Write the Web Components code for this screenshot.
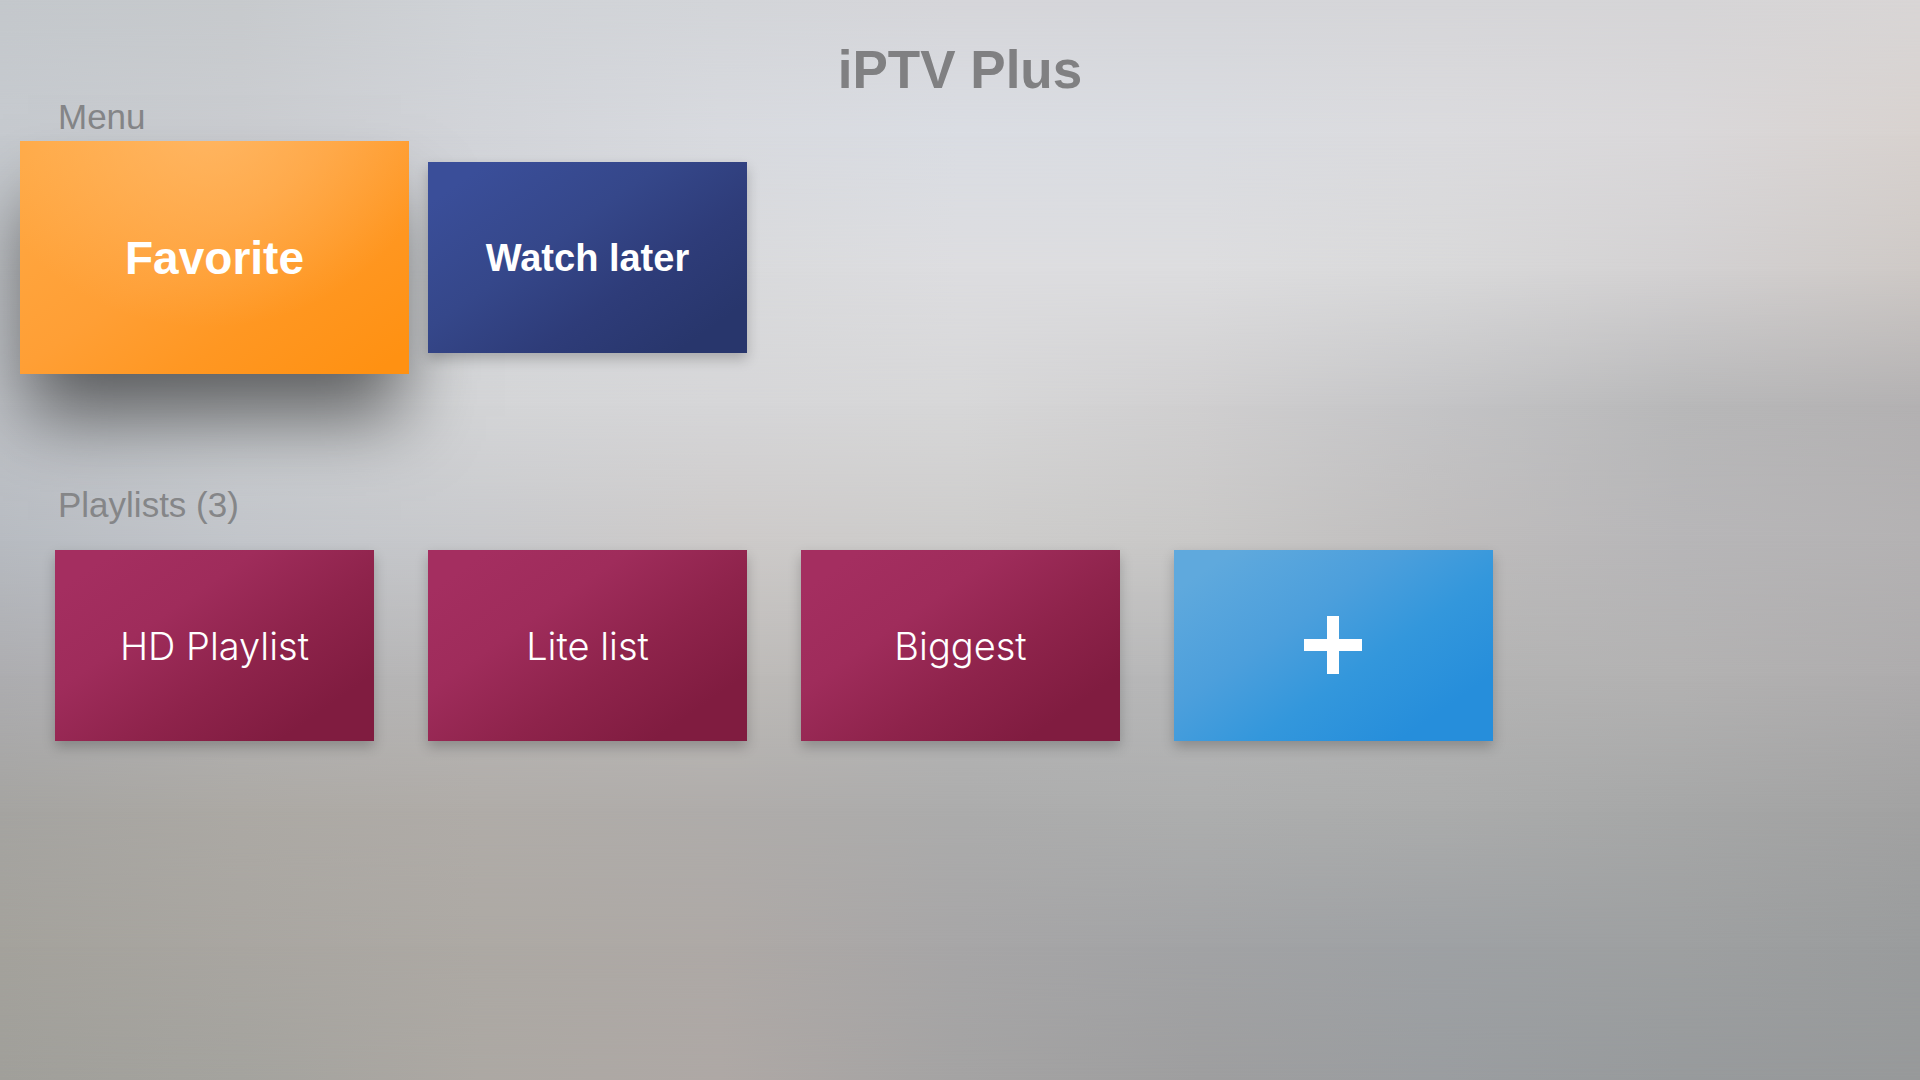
<!DOCTYPE html>
<html lang="en">
<head>
<meta charset="utf-8">
<title>iPTV Plus</title>
<style>
  html, body { margin: 0; min-height: 100%; }
  body { font-family: "Liberation Sans", Arial, sans-serif; color: #858688; }
</style>
</head>
<body>
<tv-app>
  <tv-shelf label="Menu">
    <tv-card tone="orange" focused>Favorite</tv-card>
    <tv-card tone="navy">Watch later</tv-card>
  </tv-shelf>
  <tv-shelf label="Playlists (3)">
    <tv-card tone="berry">HD Playlist</tv-card>
    <tv-card tone="berry">Lite list</tv-card>
    <tv-card tone="berry">Biggest</tv-card>
    <tv-card tone="sky" name="Add playlist"><tv-plus></tv-plus></tv-card>
  </tv-shelf>
</tv-app>

<script>
// Ambient wallpaper: rows of horizontal gradients blended vertically into a soft colour mesh.
const MESH = [
  'c4c8cc c7cacd d0d3d7 d3d5d9 d6d6da d5d6da d6d6d9 d6d5d7 d9d6d6',
  'c6cacf cbcdd1 d2d4d9 d8dadf dadde3 dadce1 dbdbde dad8da d8d2cf',
  'c2c5c9 cdd0d3 d5d7da d9dadc dddde0 dddddf d9d9da d3d1d2 cec9c6',
  'c1c4c9 cccfd2 d4d5d7 d6d6d8 d7d7d8 d0cfd0 c4c4c6 b8b8b9 b3b1b2',
  'b7bbc1 c2c5ca c8c9cc cdcac9 cdcccb c9c8c7 bfbdbd b7b6b8 b4b2b3',
  'adadb0 b3b3b5 b8b7b7 bebbb8 b8b8b8 b7b7b8 b4b4b4 b3b2b2 aeacad',
  'a5a4a1 aca9a4 b0aca8 afacaa acacac adaeae abacac a6a7a7 a2a2a2',
  'a4a29c a9a6a1 ada9a4 aea9a6 a7a6a7 a2a3a5 9ea1a4 9ea0a1 9a9c9d',
  'a09f9a a4a39e aca8a3 aea8a5 a4a3a3 9e9e9f 9a9da0 979a9c 97999a'
].map(r => r.split(' ').map(c => '#' + c));

class TvBackdrop extends HTMLElement {
  constructor() {
    super();
    const step = 100 / (MESH.length - 1);
    const layers = MESH.map((row, i) => {
      const mask = i ? `linear-gradient(transparent ${(i - 1) * step}%, #000 ${i * step}%)` : 'none';
      return `<div style="background:linear-gradient(90deg,${row.join(',')});mask-image:${mask}"></div>`;
    }).join('');
    this.attachShadow({ mode: 'open' }).innerHTML = `
      <style>
        :host { display: grid; isolation: isolate; }
        div { grid-area: 1 / 1; }
      </style>${layers}`;
  }
}

class TvApp extends HTMLElement {
  constructor() {
    super();
    this.attachShadow({ mode: 'open' }).innerHTML = `
      <style>
        :host { display: grid; grid-template-columns: minmax(0, 1fr); min-height: 100vh; overflow: hidden; }
        tv-backdrop, main { grid-area: 1 / 1; }
        main { z-index: 1; display: flex; flex-direction: column; padding-top: 43px; }
        h1 { margin: 0; font-size: 53px; line-height: 54px; text-align: center; color: #808082; }
        .shelves { display: flex; flex-direction: column; gap: 132px; }
      </style>
      <tv-backdrop></tv-backdrop>
      <main>
        <h1>iPTV Plus</h1>
        <div class="shelves"><slot></slot></div>
      </main>`;
  }
}

class TvShelf extends HTMLElement {
  connectedCallback() {
    if (this.shadowRoot) return;
    this.attachShadow({ mode: 'open' }).innerHTML = `
      <style>
        :host { display: block; padding: 0 55px; }
        section { display: flex; flex-direction: column; gap: 25px; }
        h2 { margin: 0; padding-left: 3px; font-size: 35px; line-height: 40px; font-weight: 400; }
        .row { display: flex; gap: 54px; }
      </style>
      <section aria-labelledby="t">
        <h2 id="t"></h2>
        <div class="row"><slot></slot></div>
      </section>`;
    this.shadowRoot.querySelector('h2').textContent = this.getAttribute('label');
  }
}

class TvCard extends HTMLElement {
  connectedCallback() {
    if (this.shadowRoot) return;
    this.attachShadow({ mode: 'open' }).innerHTML = `
      <style>
        :host { display: flex; flex: none; align-items: center; justify-content: center; width: 319px; height: 191px; }
        button {
          flex: none; display: flex; align-items: center; justify-content: center;
          width: 319px; height: 191px; margin: 0; padding: 0; border: 0; outline: 0;
          font: bold 38px/44px "Liberation Sans", Arial, sans-serif; color: #fff;
          background: var(--fill); box-shadow: 0 6px 12px rgba(0, 0, 0, .22);
        }
        :host([focused]) button {
          width: 389px; height: 233px; font-size: 46px;
          box-shadow: 0 50px 70px -8px rgba(0, 0, 0, .55);
        }
        :host([tone=orange]) { --fill: radial-gradient(ellipse 60% 90% at 48% -10%, rgba(255,190,115,.7), rgba(255,190,115,0)), linear-gradient(145deg, #ffa843 5%, #ff9f35 45%, #ff9722 68%, #ff9112 95%); }
        :host([tone=navy]) { --fill: linear-gradient(145deg, #3a4e99 10%, #35478a 40%, #2e3c79 64%, #28366c 88%); }
        :host([tone=berry]) { --fill: linear-gradient(145deg, #a42e60 10%, #9f2c5b 34%, #8e234b 60%, #801c40 84%); }
        :host([tone=sky]) { --fill: linear-gradient(145deg, #5fa9dd 10%, #4c9fdc 38%, #3397dc 60%, #268edb 84%); }
        :host([tone=berry]) button { font-family: Inter, "Liberation Sans", sans-serif; font-weight: 300; }
      </style>
      <button type="button"><slot></slot></button>`;
    const name = this.getAttribute('name');
    if (name) this.shadowRoot.querySelector('button').setAttribute('aria-label', name);
  }
}

class TvPlus extends HTMLElement {
  constructor() {
    super();
    this.attachShadow({ mode: 'open' }).innerHTML = `
      <style>
        :host { display: block; }
        svg { display: block; width: 59px; height: 59px; }
      </style>
      <svg viewBox="0 0 59 59" aria-hidden="true" shape-rendering="crispEdges"><path fill="#fff" d="M23 0h12v23h23v12H35v23H23V35H0V23h23z"/></svg>`;
  }
}

customElements.define('tv-backdrop', TvBackdrop);
customElements.define('tv-plus', TvPlus);
customElements.define('tv-card', TvCard);
customElements.define('tv-shelf', TvShelf);
customElements.define('tv-app', TvApp);
</script>
</body>
</html>
